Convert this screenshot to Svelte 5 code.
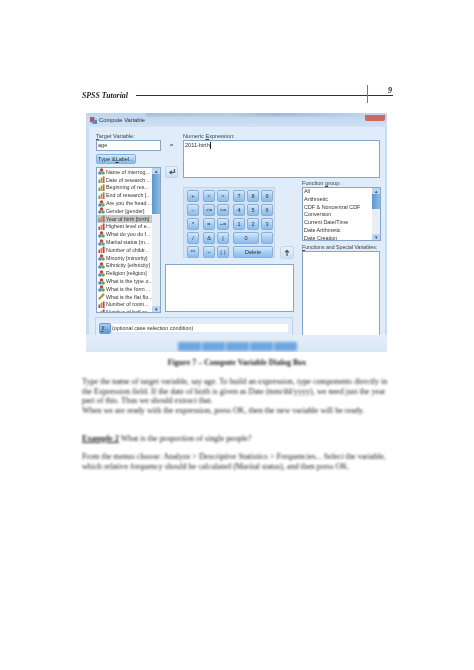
<script lang="ts">
  // icon kinds: n = nominal balls, s = scale bars, o = ordinal bars (red), r = ruler
  const variables = [
    ["n", "Name of interrog..."],
    ["s", "Date of research ..."],
    ["s", "Beginning of res..."],
    ["s", "End of research [..."],
    ["n", "Are you the head ..."],
    ["n", "Gender [gender]"],
    ["s", "Year of birth [birth]"],
    ["o", "Highest level of e..."],
    ["n", "What do you do f..."],
    ["n", "Marital status [m..."],
    ["o", "Number of childr..."],
    ["n", "Minority [minority]"],
    ["n", "Ethnicity [ethnicity]"],
    ["n", "Religion [religion]"],
    ["n", "What is the type o..."],
    ["n", "What is the form ..."],
    ["r", "What is the flat flo..."],
    ["o", "Number of room..."],
    ["o", "Number of half ro..."],
  ];
  const SELECTED = 6;

  const functionGroups = [
    "All",
    "Arithmetic",
    "CDF & Noncentral CDF",
    "Conversion",
    "Current Date/Time",
    "Date Arithmetic",
    "Date Creation",
  ];

  const opsLeft = ["+", "-", "*", "/", "**"];
  const opsMid = ["<", ">", "<=", ">=", "=", "~=", "&", "|", "~", "( )"];
</script>

<main class="page">
  <header class="running-head">
    <span class="head-title">SPSS Tutorial</span>
    <span class="head-rule"></span>
    <span class="head-page">9</span>
  </header>

  <section class="dialog">
    <div class="titlebar">
      <svg class="title-icon" viewBox="0 0 8 8">
        <rect x="0" y="0" width="5" height="6" fill="#b8506e" />
        <rect x="3" y="3" width="5" height="5" fill="#5b86c4" />
      </svg>
      <span>Compute Variable</span>
      <span class="smudges"></span>
      <span class="close"></span>
    </div>

    <div class="client">
      <div class="columns">
        <div class="left">
          <span class="lbl"><u>T</u>arget Variable:</span>
          <div class="field target">age</div>
          <div class="btn type-label">Type &amp; <u>L</u>abel...</div>
          <div class="varlist">
            <ul>
              {#each variables as [kind, name], i}
                <li class:selected={i === SELECTED}>
                  <svg viewBox="0 0 8 8">
                    {#if kind === "n"}
                      <circle cx="4" cy="2.4" r="2" fill="#c8413a" />
                      <circle cx="2.2" cy="5.6" r="2" fill="#4f86c6" />
                      <circle cx="5.8" cy="5.6" r="2" fill="#6aa84f" />
                    {:else if kind === "r"}
                      <path d="M1 7 7 1" stroke="#b59a3c" stroke-width="2.6" />
                    {:else}
                      <rect x="0.5" y="4" width="2" height="4" fill={kind === "o" ? "#c8413a" : "#6aa84f"} />
                      <rect x="3" y="2" width="2" height="6" fill="#c98a3a" />
                      <rect x="5.5" y="0.5" width="2" height="7.5" fill={kind === "o" ? "#c8413a" : "#b5763a"} />
                    {/if}
                  </svg>
                  <span>{name}</span>
                </li>
              {/each}
            </ul>
            <div class="scrollbar">
              <span class="arrow">▴</span>
              <span class="thumb"></span>
              <span class="arrow end">▾</span>
            </div>
          </div>
        </div>

        <div class="right">
          <div class="expr-row">
            <div class="mid">
              <span class="equals">=</span>
              <div class="square-btn">
                <svg viewBox="0 0 8 8"><path d="M6.5 1v3.4H2M3.6 2.6 1.8 4.4l1.8 1.8" fill="none" stroke="#4a5a6a" stroke-width="1.2" /></svg>
              </div>
            </div>
            <div class="expr">
              <span class="lbl">Numeric <u>E</u>xpression:</span>
              <div class="field expr-box">2011-birth<span class="caret"></span></div>
            </div>
          </div>

          <div class="lower-row">
            <div class="center">
              <div class="pad-row">
                <div class="pad">
                  <div class="keys one">
                    {#each opsLeft as key}<span class="btn key">{key}</span>{/each}
                  </div>
                  <div class="keys two">
                    {#each opsMid as key}<span class="btn key">{key}</span>{/each}
                  </div>
                  <div class="keys three">
                    {#each ["7", "8", "9", "4", "5", "6", "1", "2", "3"] as key}<span class="btn key">{key}</span>{/each}
                    <span class="btn key span2">0</span>
                    <span class="btn key"></span>
                    <span class="btn key span3">Delete</span>
                  </div>
                </div>
                <div class="square-btn up">
                  <svg viewBox="0 0 8 8"><path d="M4 7V1.5M2 3.4 4 1.4l2 2" fill="none" stroke="#4a5a6a" stroke-width="1.2" /></svg>
                </div>
              </div>
              <div class="field description"></div>
            </div>

            <div class="functions">
              <span class="lbl">Function <u>g</u>roup:</span>
              <div class="field group-list">
                <ul>
                  {#each functionGroups as group}<li>{group}</li>{/each}
                </ul>
                <div class="scrollbar">
                  <span class="arrow">▴</span>
                  <span class="thumb"></span>
                  <span class="arrow end">▾</span>
                </div>
              </div>
              <span class="lbl fn-label"><u>F</u>unctions and Special Variables:</span>
              <div class="field fn-list"></div>
            </div>
          </div>
        </div>
      </div>

      <div class="if-panel">
        <span class="btn if-btn"><u>I</u>f...</span>
        <span class="if-text">(optional case selection condition)</span>
      </div>
    </div>

    <div class="footer">
      <div class="footer-btns">
        <span></span><span></span><span></span><span></span><span></span>
      </div>
    </div>
  </section>

  <div class="doc-text">
    <p class="caption">Figure 7 – Compute Variable Dialog Box</p>
    <p class="para">
      Type the name of target variable, say age. To build an expression, type components directly in<br />
      the Expression field. If the date of birth is given as Date (mm/dd/yyyy), we need just the year<br />
      part of this. Thus we should extract that.<br />
      When we are ready with the expression, press OK, then the new variable will be ready.
    </p>
    <p class="example"><b><u>Example 2</u></b> What is the proportion of single people?</p>
    <p class="para">
      From the menus choose: Analyze &gt; Descriptive Statistics &gt; Frequencies... Select the variable,<br />
      which relative frequency should be calculated (Marital status), and then press OK.
    </p>
  </div>
</main>

<style>
  :global(body) {
    margin: 0;
    background: #fff;
  }
  .page {
    width: 474px;
    height: 670px;
    box-sizing: border-box;
    padding: 85px 82px 0;
    overflow: hidden;
    font-family: "Liberation Sans", Arial, sans-serif;
  }
  ul {
    list-style: none;
    margin: 0;
    padding: 0;
  }

  /* running head */
  .running-head {
    position: relative;
    display: flex;
    align-items: center;
    height: 18px;
    gap: 8px;
    font-family: "Liberation Serif", "Times New Roman", serif;
    font-weight: bold;
    font-style: italic;
    color: #222;
    filter: blur(0.3px);
  }
  .head-title {
    font-size: 7.8px;
    margin-top: 2px;
  }
  .head-rule {
    flex: 1;
    height: 1px;
    background: #333;
    margin-top: 2px;
    margin-right: -1px;
  }
  .head-rule::after {
    content: "";
    position: absolute;
    left: 285px;
    top: 0;
    width: 1px;
    height: 18px;
    background: #777;
  }
  .head-page {
    position: absolute;
    right: 0;
    top: 1px;
    font-size: 8px;
  }

  /* dialog */
  .dialog {
    width: 301px;
    height: 239px;
    margin: 10px 0 0 4px;
    display: flex;
    flex-direction: column;
    overflow: hidden;
    background: #c6dcf2;
    border-radius: 2px 2px 0 0;
    filter: blur(0.45px);
  }
  .titlebar {
    position: relative;
    height: 14px;
    flex: none;
    display: flex;
    align-items: center;
    gap: 2px;
    padding-left: 4px;
    font-size: 5.8px;
    color: #333;
    background: linear-gradient(#bdd4ec, #d0e2f4);
  }
  .title-icon {
    width: 7px;
    height: 7px;
  }
  .smudges {
    position: absolute;
    left: 60px;
    right: 28px;
    top: 0;
    height: 3px;
    background: linear-gradient(90deg, #8fa6bf, #a9c0d8 40%, #7f97b2 60%, #b6cfe9);
    filter: blur(1px);
    opacity: 0.6;
  }
  .close {
    position: absolute;
    right: 2px;
    top: 2px;
    width: 20px;
    height: 6px;
    border-radius: 0 0 2px 2px;
    background: #c8695f;
  }
  .client {
    flex: 1;
    min-height: 0;
    margin: 0 2px 0 3px;
    padding: 0 5px 0 7px;
    display: flex;
    flex-direction: column;
    overflow: hidden;
    background: #e0ecf9;
  }
  .columns {
    display: flex;
    gap: 4px;
    height: 190px;
    flex: none;
  }
  .lbl {
    display: block;
    height: 8px;
    line-height: 8px;
    font-size: 5.6px;
    color: #444;
    white-space: nowrap;
  }
  .field {
    box-sizing: border-box;
    background: #fff;
    border: 1px solid #86a6c8;
    font-size: 5.6px;
    color: #333;
  }
  .btn {
    box-sizing: border-box;
    display: flex;
    align-items: center;
    justify-content: center;
    border: 1px solid #86b0da;
    border-radius: 2px;
    background: linear-gradient(#d6e9fb, #a4cdf3 55%, #8cbcec);
    font-size: 5.6px;
    color: #333;
  }

  /* left column */
  .left {
    width: 65px;
    flex: none;
    padding-top: 5px;
  }
  .target {
    height: 11px;
    line-height: 9px;
    padding-left: 1px;
  }
  .type-label {
    width: 40px;
    height: 10px;
    margin: 3px 0;
    white-space: nowrap;
  }
  .varlist {
    position: relative;
    height: 146px;
    box-sizing: border-box;
    border: 1px solid #86a6c8;
    background: #fff;
    overflow: hidden;
    display: flex;
  }
  .varlist ul {
    flex: 1;
    min-width: 0;
  }
  .varlist li {
    display: flex;
    align-items: center;
    gap: 1px;
    height: 7.8px;
    font-size: 5.3px;
    color: #333;
    white-space: nowrap;
  }
  .varlist li.selected {
    background: #c9c9c9;
  }
  .varlist svg {
    width: 7px;
    height: 7px;
    flex: none;
    margin-left: 1px;
  }
  .scrollbar {
    width: 8px;
    flex: none;
    display: flex;
    flex-direction: column;
    background: #e9eef4;
    font-size: 5px;
    color: #25507f;
  }
  .arrow {
    height: 6px;
    line-height: 6px;
    text-align: center;
    background: #bcd6f0;
  }
  .arrow.end {
    margin-top: auto;
  }
  .thumb {
    height: 28%;
    background: linear-gradient(90deg, #5d96cf, #8cbbe6);
  }

  /* right side */
  .right {
    flex: 1;
    min-width: 0;
  }
  .expr-row {
    display: flex;
    gap: 5px;
    height: 51px;
  }
  .mid {
    width: 13px;
    flex: none;
    display: flex;
    flex-direction: column;
    align-items: center;
  }
  .equals {
    margin-top: 15px;
    height: 24px;
    font-size: 6px;
    color: #444;
  }
  .square-btn {
    width: 13px;
    height: 12px;
    flex: none;
    border: 1px solid #c4d6e8;
    box-sizing: border-box;
    border-radius: 2px;
    background: linear-gradient(#e8f1fa, #ccdff1);
    display: flex;
    align-items: center;
    justify-content: center;
  }
  .square-btn svg {
    width: 8px;
    height: 8px;
  }
  .expr {
    flex: 1;
    padding-top: 5px;
  }
  .expr-box {
    height: 38px;
    width: 197px;
    padding: 1px 1px;
    line-height: 7px;
  }
  .caret {
    display: inline-block;
    width: 1px;
    height: 7px;
    background: #222;
    vertical-align: top;
  }
  .lower-row {
    display: flex;
    gap: 8px;
  }
  .center {
    width: 129px;
    flex: none;
  }
  .pad-row {
    display: flex;
    align-items: flex-end;
    gap: 5px;
    margin: 9px 0 0 18px;
  }
  .pad {
    display: flex;
    gap: 4px;
    width: 92px;
    height: 71px;
    box-sizing: border-box;
    padding: 2px 3px;
    flex: none;
    border: 1px solid #c3d5e6;
    background: #d3e3f3;
  }
  .keys {
    display: grid;
    grid-template-rows: repeat(5, 12px);
    row-gap: 2px;
    flex: none;
  }
  .keys.one {
    grid-template-columns: 12px;
  }
  .keys.two {
    grid-template-columns: 12px 12px;
    column-gap: 2px;
  }
  .keys.three {
    grid-template-columns: 12px 12px 12px;
    column-gap: 2px;
  }
  .span2 {
    grid-column: span 2;
  }
  .span3 {
    grid-column: span 3;
  }
  .up {
    width: 14px;
    height: 13px;
    margin: 0 0 -1px;
  }
  .description {
    width: 129px;
    height: 48px;
    margin-top: 6px;
  }
  .functions {
    width: 79px;
    flex: none;
    margin-top: 1px;
  }
  .group-list {
    display: flex;
    height: 54px;
    overflow: hidden;
  }
  .group-list ul {
    flex: 1;
    min-width: 0;
    padding-left: 1px;
    font-size: 5.4px;
  }
  .group-list li {
    height: 7.8px;
    line-height: 7px;
    white-space: nowrap;
  }
  .fn-label {
    margin-top: 2px;
    font-size: 5.2px;
  }
  .fn-list {
    height: 100px;
    width: 78px;
  }

  /* if row */
  .if-panel {
    display: flex;
    align-items: center;
    gap: 1px;
    width: 198px;
    height: 18px;
    flex: none;
    box-sizing: border-box;
    padding: 3px 4px 0 3px;
    margin-left: -1px;
    border: 1px solid #c0d3e6;
    border-bottom: 0;
  }
  .if-btn {
    width: 12px;
    height: 11px;
    flex: none;
    font-size: 5px;
    background: linear-gradient(#a9cdf0, #5f97d6);
    border-color: #6d9bcc;
  }
  .if-text {
    flex: 1;
    height: 8px;
    line-height: 8px;
    background: #fff;
    font-size: 5.4px;
    color: #333;
    white-space: nowrap;
  }

  /* blurred button strip */
  .footer {
    height: 17px;
    flex: none;
    padding: 7px 0 0 92px;
    box-sizing: border-box;
    background: linear-gradient(#e4eef8, #d9e7f5);
  }
  .footer-btns {
    display: flex;
    gap: 1px;
    filter: blur(1.5px);
  }
  .footer-btns span {
    width: 23px;
    height: 9px;
    background: #6fa5de;
  }

  /* body text */
  .doc-text {
    margin-top: 6px;
    font-family: "Liberation Serif", "Times New Roman", serif;
    font-size: 8.15px;
    line-height: 9.4px;
    color: #222;
    filter: blur(0.8px);
  }
  .doc-text p {
    margin: 0;
    white-space: nowrap;
  }
  .caption {
    text-align: center;
    font-size: 8px;
    font-weight: bold;
    margin-bottom: 10px !important;
  }
  .example {
    margin: 19px 0 9px !important;
  }
</style>
